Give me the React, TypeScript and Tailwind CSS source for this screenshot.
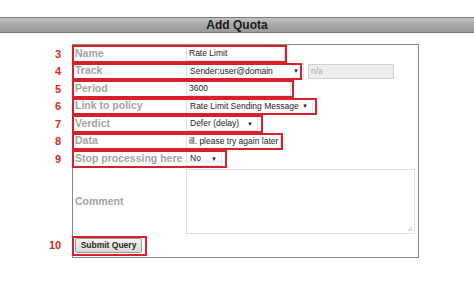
import React from 'react';

const font = { fontFamily: '"Liberation Sans", Arial, sans-serif' };

interface RowProps {
  num: string;
  label: string;
  frame: string;
  children: React.ReactNode;
}

// one form row, with its red annotation frame and number
const Row: React.FC<RowProps> = ({ num, label, frame, children }) => (
  <div className="relative flex items-center h-[17.5px]">
    <div className={`absolute left-[-1px] top-0 h-full border-2 border-[#d81f2a] ${frame}`} />
    <span className="absolute left-[-22px] w-[14px] text-center text-[11px] font-bold text-[#d32a2a]">{num}</span>
    <div className="w-[113px] pl-[2px] text-[10.5px] font-bold text-[#a3a3a3] whitespace-nowrap">{label}</div>
    {children}
  </div>
);

const Arrow = () => <span className="text-[6px] text-[#222] leading-none">▼</span>;

const Select: React.FC<{ w: string; text: string }> = ({ w, text }) => (
  <div className={`flex items-center justify-between h-[15px] pl-[3px] pr-[4px] bg-white border border-[#e2e2e2] text-[8.5px] text-[#222] ${w}`}>
    <span className="whitespace-nowrap">{text}</span>
    <Arrow />
  </div>
);

const Input: React.FC<{ w: string; text: string }> = ({ w, text }) => (
  <div className={`flex items-center h-[15px] pl-[2px] bg-white border border-[#e2e2e2] text-[8.5px] text-[#222] overflow-hidden whitespace-nowrap ${w}`}>
    {text}
  </div>
);

export default function App() {
  return (
    <div className="w-[474px] h-[292px] bg-white" style={font}>
      <div className="h-[17px]" />
      <div className="h-[16px] flex items-center justify-center bg-gradient-to-b from-[#c2c2c2] via-[#a8a8a8] to-[#9a9a9a] border-y border-[#7d7d7d] text-[12px] font-bold text-[#1a1a1a]">
        Add Quota
      </div>
      <div className="mt-[11px] ml-[72px] w-[347px] border border-[#8a8a8a] pb-[1px]">
        <Row num="3" label="Name" frame="w-[215px]">
          <Input w="w-[99px]" text="Rate Limit" />
        </Row>
        <Row num="4" label="Track" frame="w-[230px]">
          <Select w="w-[118px]" text="Sender:user@domain" />
          <div className="ml-[4px] flex items-center h-[15px] w-[86px] pl-[2px] bg-[#ededed] border border-[#cfcfcf] text-[8.5px] text-[#aaa]">
            n/a
          </div>
        </Row>
        <Row num="5" label="Period" frame="w-[222px]">
          <Input w="w-[105px]" text="3600" />
        </Row>
        <Row num="6" label="Link to policy" frame="w-[245px]">
          <Select w="w-[127px]" text="Rate Limit Sending Message" />
        </Row>
        <Row num="7" label="Verdict" frame="w-[191px]">
          <Select w="w-[72px]" text="Defer (delay)" />
        </Row>
        <Row num="8" label="Data" frame="w-[211px]">
          <Input w="w-[95px]" text="ill. please try again later" />
        </Row>
        <Row num="9" label="Stop processing here" frame="w-[155px]">
          <Select w="w-[36px]" text="No" />
        </Row>
        <div className="flex items-center h-[68px]">
          <div className="w-[113px] pl-[2px] text-[10.5px] font-bold text-[#a3a3a3]">Comment</div>
          <div className="relative h-[65px] w-[229px] border border-[#dedede] bg-white">
            <svg className="absolute right-[1px] bottom-[1px]" width="6" height="6" viewBox="0 0 6 6">
              <path d="M5 1 L1 5 M5 3 L3 5" stroke="#b5b5b5" strokeWidth="0.8" />
            </svg>
          </div>
        </div>
        <div className="relative flex items-center h-[20px]">
          <div className="absolute left-[-1px] top-0 h-full w-[75px] border-2 border-[#d81f2a]" />
          <span className="absolute left-[-24px] text-[11px] font-bold text-[#d32a2a]">10</span>
          <div className="ml-[2px] h-[15px] w-[67px] flex items-center justify-center rounded-[2px] border border-[#9a9a9a] bg-gradient-to-b from-[#f4f4f4] to-[#d9d9d9] text-[8.5px] font-semibold text-[#2a2a2a]">
            Submit Query
          </div>
        </div>
      </div>
    </div>
  );
}
